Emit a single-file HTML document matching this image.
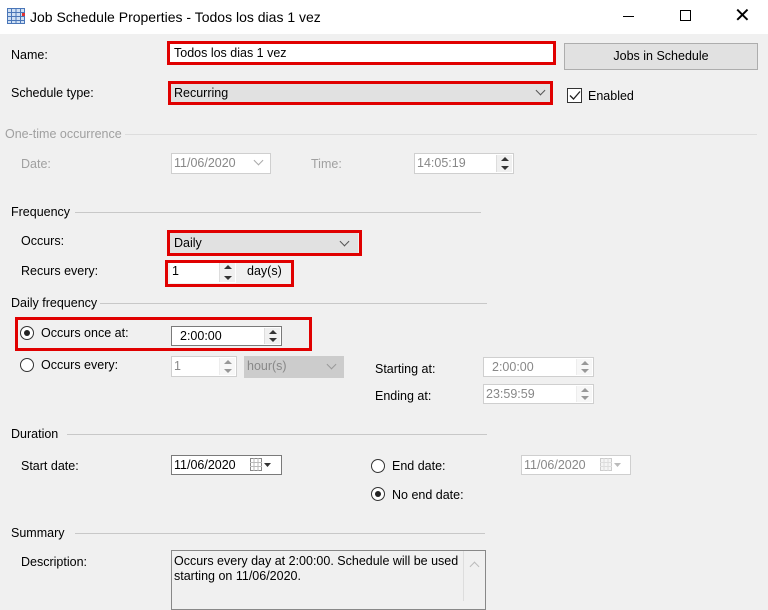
<!DOCTYPE html>
<html><head><style>
*{box-sizing:border-box;margin:0;padding:0}
body{width:768px;height:599px;overflow:hidden;background:#f0f0f0;font-family:"Liberation Sans",sans-serif;font-size:12.5px;color:#000;position:relative}
.a{position:absolute;white-space:nowrap}
.g{color:#a0a0a0}
.red{position:absolute;border:3px solid #e00000}
.box{position:absolute;background:#fff;border:1px solid #7a7a7a}
.dis{position:absolute;background:#fff;border:1px solid #cfcfcf;color:#888}
.line{position:absolute;height:1px;background:#c8c8c8}
.spin{position:absolute;right:1px;top:1px;bottom:1px;width:16px;background:#f0f0f0;border-left:1px solid #ddd}
.spin:before{content:"";position:absolute;left:4px;top:2px;border:4px solid transparent;border-bottom:4px solid #333;border-top:0}
.spin:after{content:"";position:absolute;left:4px;bottom:2px;border:4px solid transparent;border-top:4px solid #333;border-bottom:0}
.radio{position:absolute;width:14px;height:14px;border:1px solid #333;border-radius:50%;background:#fff}
.radio.on:after{content:"";position:absolute;left:3px;top:3px;width:6px;height:6px;border-radius:50%;background:#222}
.chev{position:absolute;width:7px;height:7px;border-right:1px solid #555;border-bottom:1px solid #555;transform:rotate(45deg)}
</style></head><body>
<div class="a" style="left:0;top:0;width:768px;height:34px;background:#fff"></div>
<svg class="a" style="left:7px;top:8px" width="18" height="16"><rect x="0.5" y="0.5" width="17" height="15" fill="#cfe0f4" stroke="#4a76b8"/><path d="M0 4.5H18M0 8.5H18M0 12.5H18M4.5 0V16M9 0V16M13.5 0V16" stroke="#4a76b8"/><rect x="15" y="5" width="3" height="3" fill="#d33"/></svg>
<div class="a" style="left:30px;top:9px;font-size:14px">Job Schedule Properties - Todos los dias 1 vez</div>
<div class="a" style="left:623px;top:16px;width:11px;height:1px;background:#000"></div>
<div class="a" style="left:680px;top:10px;width:11px;height:11px;border:1px solid #000"></div>
<div class="a" style="left:734px;top:3px;font-size:20px;font-weight:300">✕</div>

<div class="a" style="left:11px;top:48px">Name:</div>
<div class="box" style="left:170px;top:44px;width:383px;height:19px;border:none"></div>
<div class="red" style="left:167px;top:41px;width:389px;height:24px"></div>
<div class="a" style="left:174px;top:46px">Todos los dias 1 vez</div>
<div class="a" style="left:564px;top:43px;width:194px;height:27px;background:#e1e1e1;border:1px solid #adadad;text-align:center;line-height:25px">Jobs in Schedule</div>

<div class="a" style="left:11px;top:86px">Schedule type:</div>
<div class="a" style="left:170px;top:83px;width:380px;height:20px;background:#e1e1e1"></div>
<div class="red" style="left:168px;top:81px;width:385px;height:24px"></div>
<div class="a" style="left:174px;top:86px">Recurring</div>
<div class="chev" style="left:537px;top:87px"></div>
<div class="a" style="left:567px;top:88px;width:15px;height:15px;border:1px solid #333;background:#fff"></div>
<svg class="a" style="left:569px;top:90px" width="12" height="11"><path d="M1 5.5L4.5 9L11 1.5" stroke="#222" stroke-width="1.3" fill="none"/></svg>
<div class="a" style="left:588px;top:89px">Enabled</div>

<div class="a g" style="left:5px;top:127px">One-time occurrence</div>
<div class="line" style="left:125px;top:134px;width:632px;background:#ddd"></div>
<div class="a g" style="left:21px;top:157px">Date:</div>
<div class="dis" style="left:171px;top:153px;width:100px;height:21px;padding:2px 0 0 2px">11/06/2020</div>
<div class="chev" style="left:255px;top:157px;border-color:#aaa"></div>
<div class="a g" style="left:311px;top:157px">Time:</div>
<div class="dis" style="left:414px;top:153px;width:100px;height:21px;padding:2px 0 0 2px">14:05:19<div class="spin"></div></div>

<div class="a" style="left:11px;top:205px">Frequency</div>
<div class="line" style="left:75px;top:212px;width:406px"></div>
<div class="a" style="left:21px;top:234px">Occurs:</div>
<div class="a" style="left:170px;top:232px;width:188px;height:21px;background:#e1e1e1"></div>
<div class="red" style="left:167px;top:230px;width:195px;height:26px"></div>
<div class="a" style="left:174px;top:236px">Daily</div>
<div class="chev" style="left:341px;top:238px"></div>
<div class="a" style="left:21px;top:264px">Recurs every:</div>
<div class="box" style="left:170px;top:262px;width:66px;height:21px;border:none;padding:2px 0 0 2px">1<div class="spin"></div></div>
<div class="red" style="left:165px;top:260px;width:129px;height:27px"></div>
<div class="a" style="left:247px;top:264px">day(s)</div>

<div class="a" style="left:11px;top:296px">Daily frequency</div>
<div class="line" style="left:100px;top:303px;width:387px"></div>
<div class="radio on" style="left:20px;top:326px"></div>
<div class="a" style="left:41px;top:326px">Occurs once at:</div>
<div class="box" style="left:171px;top:326px;width:111px;height:20px;padding:2px 0 0 8px">2:00:00<div class="spin"></div></div>
<div class="red" style="left:15px;top:317px;width:297px;height:34px"></div>
<div class="radio" style="left:20px;top:358px"></div>
<div class="a" style="left:41px;top:358px">Occurs every:</div>
<div class="dis" style="left:171px;top:356px;width:66px;height:21px;padding:2px 0 0 2px">1<div class="spin" style="opacity:.5"></div></div>
<div class="a" style="left:244px;top:356px;width:100px;height:22px;background:#ccc;color:#888;padding:3px 0 0 3px">hour(s)</div>
<div class="chev" style="left:328px;top:361px;border-color:#999"></div>
<div class="a" style="left:375px;top:362px">Starting at:</div>
<div class="dis" style="left:483px;top:357px;width:111px;height:20px;padding:2px 0 0 8px">2:00:00<div class="spin" style="opacity:.5"></div></div>
<div class="a" style="left:375px;top:389px">Ending at:</div>
<div class="dis" style="left:483px;top:384px;width:111px;height:20px;padding:2px 0 0 2px">23:59:59<div class="spin" style="opacity:.5"></div></div>

<div class="a" style="left:11px;top:427px">Duration</div>
<div class="line" style="left:67px;top:434px;width:420px"></div>
<div class="a" style="left:21px;top:459px">Start date:</div>
<div class="box" style="left:171px;top:455px;width:111px;height:20px;padding:2px 0 0 2px">11/06/2020</div>
<svg class="a" style="left:250px;top:458px" width="24" height="14"><rect x="0.5" y="0.5" width="11" height="12" fill="#fff" stroke="#888"/><path d="M0 4.5H12M0 8.5H12M4 0V13M8 0V13" stroke="#bbb"/><path d="M14 5h7l-3.5 4z" fill="#333"/></svg>
<div class="radio" style="left:371px;top:459px"></div>
<div class="a" style="left:392px;top:459px">End date:</div>
<div class="dis" style="left:521px;top:455px;width:110px;height:20px;padding:2px 0 0 2px">11/06/2020</div>
<svg class="a" style="left:600px;top:458px" width="24" height="14"><rect x="0.5" y="0.5" width="11" height="12" fill="#f4f4f4" stroke="#ccc"/><path d="M0 4.5H12M0 8.5H12M4 0V13M8 0V13" stroke="#ddd"/><path d="M14 5h7l-3.5 4z" fill="#bbb"/></svg>
<div class="radio on" style="left:371px;top:487px"></div>
<div class="a" style="left:392px;top:488px">No end date:</div>

<div class="a" style="left:11px;top:526px">Summary</div>
<div class="line" style="left:75px;top:533px;width:410px"></div>
<div class="a" style="left:21px;top:555px">Description:</div>
<div class="a" style="left:171px;top:550px;width:315px;height:60px;background:#f0f0f0;border:1px solid #888"></div>
<div class="a" style="left:463px;top:551px;width:22px;height:50px;background:#f0f0f0;border-left:1px solid #ddd"></div>
<div class="chev" style="left:471px;top:563px;transform:rotate(225deg);border-color:#bbb"></div>
<div class="a" style="left:174px;top:554px;line-height:15px">Occurs every day at 2:00:00. Schedule will be used<br>starting on 11/06/2020.</div>
</body></html>
